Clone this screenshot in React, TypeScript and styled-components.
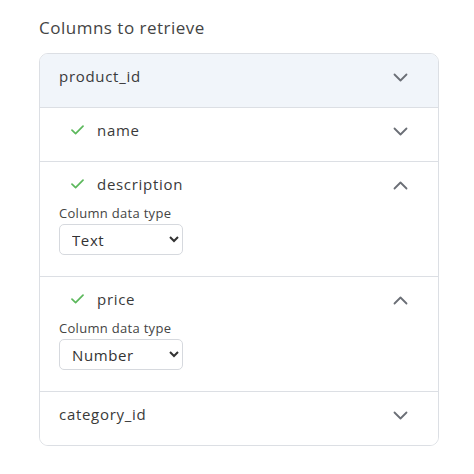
import React from 'react';
import styled, { createGlobalStyle } from 'styled-components';

const GlobalStyle = createGlobalStyle`
  body {
    margin: 0;
    background: #ffffff;
    font-family: 'Open Sans', 'Liberation Sans', sans-serif;
    color: #3a3a3a;
  }
`;

const Page = styled.div`
  width: 474px;
  height: 474px;
  box-sizing: border-box;
  padding: 16px 35px 0 39px;
`;

const Title = styled.div`
  font-size: 17px;
  line-height: 24px;
  letter-spacing: 0.5px;
  color: #444;
  margin-bottom: 13px;
`;

const Card = styled.div`
  border: 1px solid #dcdfe4;
  border-radius: 9px;
  overflow: hidden;
`;

const Row = styled.div<{ $active?: boolean }>`
  background: ${(p) => (p.$active ? '#f1f5fa' : '#ffffff')};
  border-top: 1px solid #dcdfe4;
  &:first-child {
    border-top: none;
  }
`;

const RowHead = styled.div<{ $height: number }>`
  height: ${(p) => p.$height}px;
  box-sizing: border-box;
  padding: 12px 30px 0 19px;
  display: flex;
  align-items: flex-start;
  justify-content: space-between;
`;

const Name = styled.div`
  display: flex;
  align-items: center;
  gap: 13px;
  font-size: 15px;
  line-height: 20px;
  letter-spacing: 0.7px;
`;

const Check = styled.svg`
  margin-left: 12px;
`;

const Chevron = styled.svg`
  margin-top: 7px;
`;

const Body = styled.div`
  padding: 0 19px 21px;
`;

const Label = styled.div`
  font-size: 13px;
  line-height: 16px;
  letter-spacing: 0.3px;
  color: #444;
  margin-bottom: 3px;
`;

const TypeSelect = styled.select`
  width: 124px;
  height: 31px;
  border: 1px solid #d6d9de;
  border-radius: 5px;
  background: #fff;
  padding: 0 6px 0 8px;
  font-family: 'Open Sans', 'Liberation Sans', sans-serif;
  font-size: 15px;
  letter-spacing: 0.6px;
  color: #333;
`;

const CheckIcon = () => (
  <Check width="13" height="10" viewBox="0 0 13 10">
    <path d="M1 5.2 L4.6 8.6 L12 1.2" fill="none" stroke="#5cb85c" strokeWidth="1.7" strokeLinecap="round" strokeLinejoin="round" />
  </Check>
);

const ChevronIcon = ({ up }: { up?: boolean }) => (
  <Chevron width="15" height="9" viewBox="0 0 15 9">
    <path
      d={up ? 'M1.5 7.5 L7.5 1.5 L13.5 7.5' : 'M1.5 1.5 L7.5 7.5 L13.5 1.5'}
      fill="none"
      stroke="#6b6f76"
      strokeWidth="1.8"
      strokeLinecap="round"
      strokeLinejoin="round"
    />
  </Chevron>
);

type Column = {
  name: string;
  checked: boolean;
  type?: string;
  active?: boolean;
};

const columns: Column[] = [
  { name: 'product_id', checked: false, active: true },
  { name: 'name', checked: true },
  { name: 'description', checked: true, type: 'Text' },
  { name: 'price', checked: true, type: 'Number' },
  { name: 'category_id', checked: false },
];

export default function App() {
  return (
    <Page>
      <GlobalStyle />
      <Title>Columns to retrieve</Title>
      <Card>
        {columns.map((col) => (
          <Row key={col.name} $active={col.active}>
            <RowHead $height={col.type ? 43 : 53}>
              <Name>
                {col.checked && <CheckIcon />}
                <span>{col.name}</span>
              </Name>
              <ChevronIcon up={!!col.type} />
            </RowHead>
            {col.type && (
              <Body>
                <Label>Column data type</Label>
                <TypeSelect defaultValue={col.type}>
                  <option>Text</option>
                  <option>Number</option>
                  <option>Date</option>
                </TypeSelect>
              </Body>
            )}
          </Row>
        ))}
      </Card>
    </Page>
  );
}
